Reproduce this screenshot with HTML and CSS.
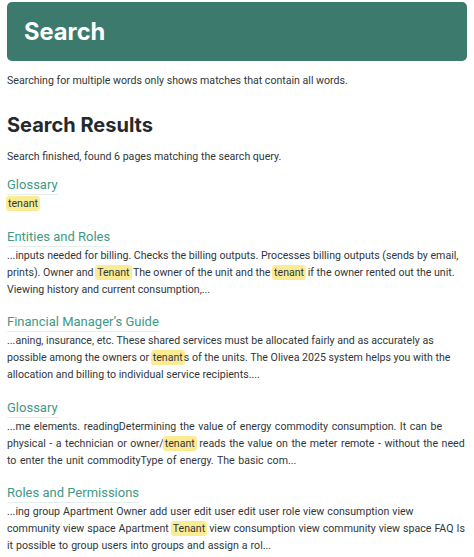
FILE: index.html
```html
<!DOCTYPE html>
<html lang="en">
<head>
<meta charset="utf-8">
<title>Search</title>
<link rel="stylesheet" href="styles.css">
</head>
<body>
<main class="page">
  <header class="banner"><h1 class="banner-title">Search</h1></header>
  <p class="intro">Searching for multiple words only shows matches that contain all words.</p>
  <h2 class="results-title">Search Results</h2>
  <p class="summary">Search finished, found 6 pages matching the search query.</p>
  <ul class="results">
    <li class="result">
      <a class="result-link" href="#">Glossary</a>
      <p class="excerpt"><mark class="hl">tenant</mark></p>
    </li>
    <li class="result">
      <a class="result-link" href="#">Entities and Roles</a>
      <p class="excerpt">...inputs needed for billing. Checks the billing outputs. Processes billing outputs (sends by email, prints). Owner and <mark class="hl">Tenant</mark> The owner of the unit and the <mark class="hl">tenant</mark> if the owner rented out the unit. Viewing history and current consumption,...</p>
    </li>
    <li class="result">
      <a class="result-link" href="#">Financial Manager’s Guide</a>
      <p class="excerpt">...aning, insurance, etc. These shared services must be allocated fairly and as accurately as possible among the owners or <mark class="hl">tenant</mark>s of the units. The Olivea 2025 system helps you with the allocation and billing to individual service recipients....</p>
    </li>
    <li class="result">
      <a class="result-link" href="#">Glossary</a>
      <p class="excerpt excerpt-wider">...me elements. readingDetermining the value of energy commodity consumption. It can be physical - a technician or owner/<mark class="hl">tenant</mark> reads the value on the meter remote - without the need to enter the unit commodityType of energy. The basic com...</p>
    </li>
    <li class="result">
      <a class="result-link" href="#">Roles and Permissions</a>
      <p class="excerpt excerpt-wide">...ing group Apartment Owner add user edit user edit user role view consumption view community view space Apartment <mark class="hl">Tenant</mark> view consumption view community view space FAQ Is it possible to group users into groups and assign a rol...</p>
    </li>
  </ul>
</main>
</body>
</html>
```

FILE: styles.css
```css
html, body {
  margin: 0;
  padding: 0;
  background: #ffffff;
}
body {
  font-family: Roboto, "Liberation Sans", Arial, sans-serif;
  color: #30363a;
  font-size: 10.6px;
  line-height: 17px;
}
.page {
  padding: 2px 7px 0 7px;
}
.banner {
  background: #3d7a6e;
  border-radius: 5px;
  height: 59px;
  display: flex;
  align-items: center;
  padding: 0 17px;
}
.banner-title {
  margin: 0;
  color: #ffffff;
  font-family: Inter, "Liberation Sans", Arial, sans-serif;
  font-size: 23.7px;
  font-weight: 700;
  line-height: 30px;
}
.intro {
  margin: 11px 0 0;
}
.results-title {
  margin: 23px 0 0;
  font-family: Inter, "Liberation Sans", Arial, sans-serif;
  font-size: 20px;
  line-height: 26px;
  font-weight: 700;
  color: #23292d;
}
.summary {
  margin: 10px 0 0;
}
.results {
  list-style: none;
  margin: 0;
  padding: 0;
}
.result {
  margin-top: 15.5px;
}
.result:first-child {
  margin-top: 11px;
}
.result-link {
  display: inline-block;
  color: #3f9985;
  font-size: 13px;
  font-weight: 400;
  line-height: 18px;
  text-decoration: none;
  border-bottom: 1px solid #e3efec;
}
.excerpt {
  margin: 0;
}
.excerpt-wide {
  word-spacing: 0.4px;
}
.excerpt-wider {
  word-spacing: 0.9px;
}
.hl {
  background: #fbec94;
  color: inherit;
  border-radius: 2px;
  padding: 0 1px;
  box-shadow: 0 0 0 1px #fbec94;
}
```
